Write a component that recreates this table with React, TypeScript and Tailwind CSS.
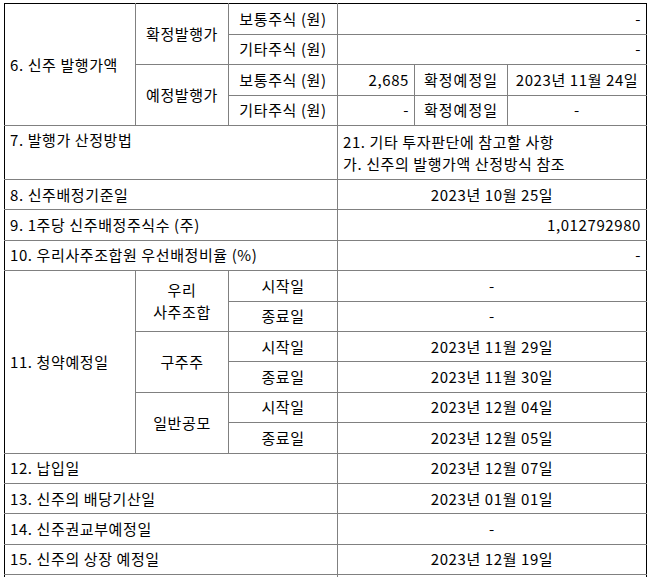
import React from 'react'

const cell = 'border border-[#808080] px-[5px] align-middle whitespace-nowrap'

const subRows = [
  { group: '우리\n사주조합', start: '-', end: '-' },
  { group: '구주주', start: '2023년 11월 29일', end: '2023년 11월 30일' },
  { group: '일반공모', start: '2023년 12월 04일', end: '2023년 12월 05일' },
]

const tailRows = [
  { label: '12. 납입일', value: '2023년 12월 07일' },
  { label: '13. 신주의 배당기산일', value: '2023년 01월 01일' },
  { label: '14. 신주권교부예정일', value: '-' },
  { label: '15. 신주의 상장 예정일', value: '2023년 12월 19일' },
]

export default function App() {
  return (
    <div className="min-h-[577px] bg-white pl-[4px] pt-[3px] text-[15px] leading-[18px] tracking-[0.6px] text-black [font-family:'Noto_Sans_CJK_KR','Noto_Sans',sans-serif]">
      <table className="w-[642px] table-fixed border-collapse border-t border-l border-r border-t-black border-l-black border-r-black">
        <colgroup>
          <col className="w-[131px]" />
          <col className="w-[93px]" />
          <col className="w-[109px]" />
          <col className="w-[77px]" />
          <col className="w-[93px]" />
          <col className="w-[139px]" />
        </colgroup>
        <tbody>
          {/* 6. 신주 발행가액 */}
          <tr className="h-[30.5px]">
            <td rowSpan={4} className={`${cell} border-t-black border-l-black`}>6. 신주 발행가액</td>
            <td rowSpan={2} className={`${cell} border-t-black text-center`}>확정발행가</td>
            <td className={`${cell} border-t-black text-center`}>보통주식 (원)</td>
            <td colSpan={3} className={`${cell} border-t-black border-r-black text-right`}>-</td>
          </tr>
          <tr className="h-[30.5px]">
            <td className={`${cell} text-center`}>기타주식 (원)</td>
            <td colSpan={3} className={`${cell} border-r-black text-right`}>-</td>
          </tr>
          <tr className="h-[30.5px]">
            <td rowSpan={2} className={`${cell} text-center`}>예정발행가</td>
            <td className={`${cell} text-center`}>보통주식 (원)</td>
            <td className={`${cell} text-right`}>2,685</td>
            <td className={`${cell} text-center tracking-[1px]`}>확정예정일</td>
            <td className={`${cell} border-r-black text-center`}>2023년 11월 24일</td>
          </tr>
          <tr className="h-[30.5px]">
            <td className={`${cell} text-center`}>기타주식 (원)</td>
            <td className={`${cell} text-right`}>-</td>
            <td className={`${cell} text-center tracking-[1px]`}>확정예정일</td>
            <td className={`${cell} border-r-black text-center`}>-</td>
          </tr>

          {/* 7. 발행가 산정방법 */}
          <tr className="h-[54px]">
            <td colSpan={3} className={`${cell} border-l-black align-top pt-[5px]`}>7. 발행가 산정방법</td>
            <td colSpan={3} className={`${cell} border-r-black align-top pt-[5px] leading-[22px]`}>
              21. 기타 투자판단에 참고할 사항
              <br />
              가. 신주의 발행가액 산정방식 참조
            </td>
          </tr>

          <tr className="h-[30.4px]">
            <td colSpan={3} className={`${cell} border-l-black`}>8. 신주배정기준일</td>
            <td colSpan={3} className={`${cell} border-r-black text-center`}>2023년 10월 25일</td>
          </tr>
          <tr className="h-[30.4px]">
            <td colSpan={3} className={`${cell} border-l-black`}>9. 1주당 신주배정주식수 (주)</td>
            <td colSpan={3} className={`${cell} border-r-black text-right`}>1,012792980</td>
          </tr>
          <tr className="h-[30.4px]">
            <td colSpan={3} className={`${cell} border-l-black`}>10. 우리사주조합원 우선배정비율 (%)</td>
            <td colSpan={3} className={`${cell} border-r-black text-right`}>-</td>
          </tr>

          {/* 11. 청약예정일 */}
          {subRows.map((row, i) => (
            <React.Fragment key={row.group}>
              <tr className="h-[30.4px]">
                {i === 0 && (
                  <td rowSpan={6} className={`${cell} border-l-black`}>11. 청약예정일</td>
                )}
                <td rowSpan={2} className={`${cell} text-center whitespace-pre-line leading-[22px]`}>{row.group}</td>
                <td className={`${cell} text-center`}>시작일</td>
                <td colSpan={3} className={`${cell} border-r-black text-center`}>{row.start}</td>
              </tr>
              <tr className="h-[30.4px]">
                <td className={`${cell} text-center`}>종료일</td>
                <td colSpan={3} className={`${cell} border-r-black text-center`}>{row.end}</td>
              </tr>
            </React.Fragment>
          ))}

          {tailRows.map((row) => (
            <tr key={row.label} className="h-[30.4px]">
              <td colSpan={3} className={`${cell} border-l-black`}>{row.label}</td>
              <td colSpan={3} className={`${cell} border-r-black text-center`}>{row.value}</td>
            </tr>
          ))}
          <tr className="h-[10px]">
            <td colSpan={3} className={`${cell} border-l-black`} />
            <td colSpan={3} className={`${cell} border-r-black`} />
          </tr>
        </tbody>
      </table>
    </div>
  )
}
